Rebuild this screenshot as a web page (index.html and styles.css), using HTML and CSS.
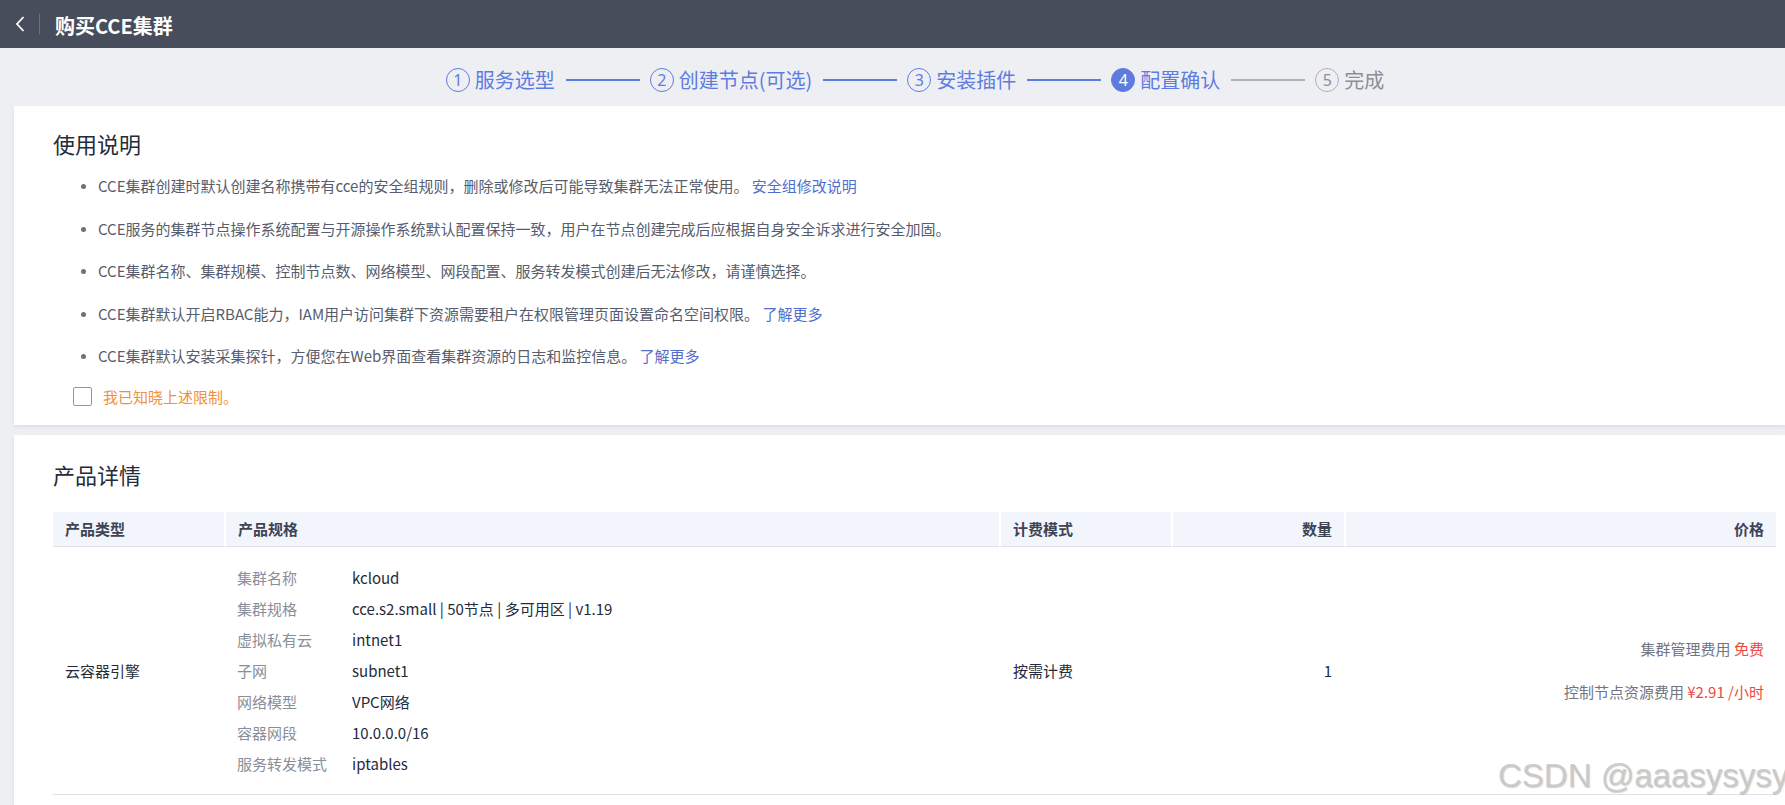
FILE: index.html
```html
<!DOCTYPE html>
<html lang="zh-CN">
<head>
<meta charset="utf-8">
<title>购买CCE集群</title>
<link rel="stylesheet" href="styles.css">
</head>
<body>
<header class="topbar">
  <a class="back" href="#" aria-label="返回"><svg width="10" height="16" viewBox="0 0 10 16"><path d="M8.5 1 L2 8 L8.5 15" fill="none" stroke="#ffffff" stroke-width="1.8"/></svg></a>
  <span class="divider"></span>
  <h1 class="page-title">购买CCE集群</h1>
</header>

<nav class="steps">
  <div class="step"><span class="num">1</span><span class="label">服务选型</span></div>
  <span class="line"></span>
  <div class="step"><span class="num">2</span><span class="label">创建节点(可选)</span></div>
  <span class="line"></span>
  <div class="step"><span class="num">3</span><span class="label">安装插件</span></div>
  <span class="line"></span>
  <div class="step current"><span class="num">4</span><span class="label">配置确认</span></div>
  <span class="line todo"></span>
  <div class="step todo"><span class="num">5</span><span class="label">完成</span></div>
</nav>

<main class="content">
  <section class="card card-notice">
    <h2 class="card-title">使用说明</h2>
    <ul class="tips">
      <li>CCE集群创建时默认创建名称携带有cce的安全组规则，删除或修改后可能导致集群无法正常使用。 <a href="#">安全组修改说明</a></li>
      <li>CCE服务的集群节点操作系统配置与开源操作系统默认配置保持一致，用户在节点创建完成后应根据自身安全诉求进行安全加固。</li>
      <li>CCE集群名称、集群规模、控制节点数、网络模型、网段配置、服务转发模式创建后无法修改，请谨慎选择。</li>
      <li>CCE集群默认开启RBAC能力，IAM用户访问集群下资源需要租户在权限管理页面设置命名空间权限。 <a href="#">了解更多</a></li>
      <li>CCE集群默认安装采集探针，方便您在Web界面查看集群资源的日志和监控信息。 <a href="#">了解更多</a></li>
    </ul>
    <label class="agree"><span class="box"></span><span class="agree-text">我已知晓上述限制。</span></label>
  </section>

  <section class="card card-detail">
    <h2 class="card-title">产品详情</h2>
    <table class="product">
      <colgroup>
        <col class="c-type"><col class="c-spec"><col class="c-bill"><col class="c-qty"><col class="c-price">
      </colgroup>
      <thead>
        <tr>
          <th>产品类型</th>
          <th>产品规格</th>
          <th>计费模式</th>
          <th class="right">数量</th>
          <th class="right">价格</th>
        </tr>
      </thead>
      <tbody>
        <tr>
          <td>云容器引擎</td>
          <td class="spec-cell">
            <dl class="spec">
              <dt>集群名称</dt><dd>kcloud</dd>
              <dt>集群规格</dt><dd>cce.s2.small | 50节点 | 多可用区 | v1.19</dd>
              <dt>虚拟私有云</dt><dd>intnet1</dd>
              <dt>子网</dt><dd>subnet1</dd>
              <dt>网络模型</dt><dd>VPC网络</dd>
              <dt>容器网段</dt><dd>10.0.0.0/16</dd>
              <dt>服务转发模式</dt><dd>iptables</dd>
            </dl>
          </td>
          <td class="bill-cell">按需计费</td>
          <td class="right">1</td>
          <td class="right price-cell">
            <p class="price-line">集群管理费用 <span class="price">免费</span></p>
            <p class="price-line">控制节点资源费用 <span class="price">¥2.91 /小时</span></p>
          </td>
        </tr>
      </tbody>
    </table>
  </section>
</main>

<div class="watermark">CSDN @aaasysysy</div>
</body>
</html>
```

FILE: styles.css
```css
* {
  box-sizing: border-box;
}

html,
body {
  margin: 0;
  padding: 0;
}

body {
  width: 1785px;
  height: 805px;
  overflow: hidden;
  background: #eeeff3;
  font-family: "Noto Sans CJK SC", "Noto Sans", sans-serif;
  font-size: 15px;
  color: #252b3a;
}

/* top bar */
.topbar {
  height: 48px;
  background: #474d5b;
  display: flex;
  align-items: center;
  padding-left: 15px;
}

.back {
  display: flex;
  width: 10px;
  height: 16px;
}

.divider {
  width: 1px;
  height: 20px;
  background: #6c7282;
  margin: 0 15px 0 14px;
}

.page-title {
  margin: 0;
  padding-top: 3px;
  font-size: 20px;
  line-height: 45px;
  font-weight: 700;
  color: #ffffff;
}

/* stepper */
.steps {
  height: 58px;
  display: flex;
  align-items: center;
  justify-content: center;
  padding: 6px 0 0 45px;
}

.step {
  display: flex;
  align-items: center;
}

.num {
  width: 24px;
  height: 24px;
  border-radius: 50%;
  border: 1.5px solid #5e7ce0;
  color: #5e7ce0;
  display: flex;
  align-items: center;
  justify-content: center;
  font-family: "Noto Sans", sans-serif;
  font-size: 16px;
  line-height: 1;
}

.label {
  margin-left: 5px;
  font-size: 20px;
  line-height: 28px;
  color: #5e7ce0;
}

.line {
  width: 74px;
  height: 2px;
  background: #5e7ce0;
  margin: 0 10px 0 11px;
}

.line.todo {
  background: #adb0b8;
}

.step.current .num {
  background: #5e7ce0;
  color: #ffffff;
}

.step.todo .num {
  border-color: #adb0b8;
  color: #8a8e99;
}

.step.todo .label {
  color: #8a8e99;
}

/* cards */
.card {
  background: #ffffff;
  margin-left: 14px;
  padding: 22px 9px 18px 39px;
  box-shadow: 0 2px 4px rgba(0, 0, 0, 0.07);
}

.card + .card {
  margin-top: 10px;
}

.card-detail {
  padding-top: 24px;
  padding-bottom: 40px;
}

.card-title {
  margin: 0;
  font-size: 22px;
  line-height: 30px;
  font-weight: 400;
  color: #252b3a;
}

.tips {
  list-style: none;
  margin: 7px 0 0;
  padding: 0;
}

.tips li {
  position: relative;
  padding: 10px 0 10px 45px;
  line-height: 22.5px;
  color: #575d6c;
}

.tips li::before {
  content: "";
  position: absolute;
  left: 28px;
  top: 19px;
  width: 5px;
  height: 5px;
  border-radius: 50%;
  background: #6c7080;
}

.tips a {
  color: #526ecc;
  text-decoration: none;
}

.agree {
  display: flex;
  align-items: center;
  height: 20px;
  margin: 9px 0 0 20px;
}

.box {
  width: 19px;
  height: 19px;
  border: 1px solid #f66f6a;
  border-radius: 2px;
  margin-right: 11px;
}

.agree-text {
  color: #f2903a;
  line-height: 20px;
}

/* product table */
.product {
  width: 100%;
  table-layout: fixed;
  border-collapse: separate;
  border-spacing: 0;
  margin-top: 23px;
}

.c-type { width: 171px; }
.c-spec { width: 775px; }
.c-bill { width: 172px; }
.c-qty { width: 173px; }
.c-price { width: 432px; }

.product th {
  height: 35px;
  background: #f2f5fc;
  font-weight: 700;
  text-align: left;
  padding: 0 12px;
  color: #3f4453;
  border-bottom: 1px solid #dfe1e6;
}

.product th + th {
  border-left: 2px solid #ffffff;
}

.product td {
  padding: 0 12px;
  vertical-align: middle;
  border-bottom: 1px solid #dfe1e6;
  color: #252b3a;
}

.product .right {
  text-align: right;
}

.product td.spec-cell {
  padding: 15px 12px 15px 13px;
}

.product td.bill-cell {
  padding-left: 14px;
}

.spec {
  display: grid;
  grid-template-columns: 115px auto;
  margin: 0;
  line-height: 31px;
}

.spec dt {
  color: #8a8e99;
}

.spec dd {
  margin: 0;
  color: #252b3a;
}

.price-line {
  margin: 0;
  line-height: 22px;
  color: #71757f;
}

.price-line + .price-line {
  margin-top: 21px;
}

.price {
  color: #f0483e;
}

/* screenshot watermark */
.watermark {
  position: absolute;
  left: 1498px;
  top: 759px;
  font-family: "Liberation Sans", Arial, sans-serif;
  font-size: 33px;
  line-height: 1;
  color: rgba(200, 200, 200, 0.9);
  text-shadow: 1px 1px 1px rgba(120, 120, 120, 0.35);
  white-space: nowrap;
  pointer-events: none;
}
```
